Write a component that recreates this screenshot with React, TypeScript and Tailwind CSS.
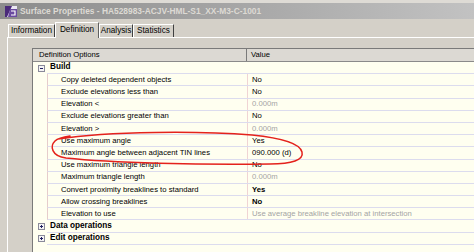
import React from "react"

type Row = { label: string; value: string; dim?: boolean; bold?: boolean }

const buildRows: Row[] = [
  { label: "Copy deleted dependent objects", value: "No" },
  { label: "Exclude elevations less than", value: "No" },
  { label: "Elevation <", value: "0.000m", dim: true },
  { label: "Exclude elevations greater than", value: "No" },
  { label: "Elevation >", value: "0.000m", dim: true },
  { label: "Use maximum angle", value: "Yes" },
  { label: "Maximum angle between adjacent TIN lines", value: "090.000 (d)" },
  { label: "Use maximum triangle length", value: "No" },
  { label: "Maximum triangle length", value: "0.000m", dim: true },
  { label: "Convert proximity breaklines to standard", value: "Yes", bold: true },
  { label: "Allow crossing breaklines", value: "No", bold: true },
  { label: "Elevation to use", value: "Use average breakline elevation at intersection", dim: true },
]

function Expander({ open }: { open: boolean }) {
  return (
    <svg width="7" height="7" viewBox="0 0 7 7" className="shrink-0">
      <rect x="0.5" y="0.5" width="6" height="6" fill="#f4f4f4" stroke="#8a8a9a" />
      <line x1="2" y1="3.5" x2="5" y2="3.5" stroke="#202060" />
      {!open && <line x1="3.5" y1="2" x2="3.5" y2="5" stroke="#202060" />}
    </svg>
  )
}

function Category({ label, open }: { label: string; open: boolean }) {
  return (
    <div className="flex h-[12.2px] items-center">
      <div className="flex w-[14px] shrink-0 justify-end pr-[2px]">
        <Expander open={open} />
      </div>
      <div className="flex h-full flex-1 items-center border-b border-[#dcdcee] pl-[3px] text-[8.2px] font-bold">
        {label}
      </div>
    </div>
  )
}

function Tab({ label, width, selected }: { label: string; width: string; selected?: boolean }) {
  if (selected) {
    return (
      <div
        className={`relative z-10 -mb-px flex h-[16px] items-center justify-center border-t border-l border-r border-t-white border-l-white border-r-[#606060] bg-[#d4d0c8] ${width}`}
      >
        {label}
      </div>
    )
  }
  return (
    <div
      className={`flex h-[13px] items-center justify-center border-t border-l border-r border-t-white border-l-white border-r-[#404040] bg-[#d4d0c8] ${width}`}
    >
      {label}
    </div>
  )
}

export default function App() {
  return (
    <div
      className="relative h-[252px] w-[474px] overflow-hidden bg-[#d4d0c8] text-[8.2px] leading-none text-black"
      style={{ fontFamily: '"Liberation Sans", Arial, sans-serif' }}
    >
      <div className="h-[3px] bg-[#dedbd5]" />
      <div className="flex h-[16px] items-center gap-[3px] bg-gradient-to-r from-[#8c8c8c] via-[#a6a6a6] to-[#c2c2c2] pl-[5px]">
        <svg width="12" height="11" viewBox="0 0 12 11">
          <rect x="0" y="0" width="12" height="11" fill="#ebe8f4" />
          <path d="M0 0 L7 0 L2 11 L0 11 Z" fill="#4a2a7a" />
          <path d="M5 3 L12 3 L12 11 L3 11 Z" fill="#6a4aa0" />
          <path d="M6 5 L10 5 L10 9 L6 9" fill="none" stroke="#ffffff" strokeWidth="1.2" />
        </svg>
        <span className="text-[8.4px] font-bold text-[#dddad4]">Surface Properties - HA528983-ACJV-HML-S1_XX-M3-C-1001</span>
      </div>

      <div className="flex h-[18px] items-end pl-[8px] pt-[3px]">
        <Tab label="Information" width="w-[47px]" />
        <Tab label="Definition" width="w-[44px]" selected />
        <Tab label="Analysis" width="w-[34px]" />
        <Tab label="Statistics" width="w-[41px]" />
      </div>

      <div className="ml-[7px] h-full border-t border-l border-white pl-[24px] pt-[10px]">
        <div className="h-full border-t border-l border-[#7a7a7a] bg-[#fffff0] text-[7.7px]">
          <div className="flex h-[13px] items-center border-b border-[#8a8a8a] bg-[#dcd9d3]">
            <div className="w-[213px] shrink-0 pl-[6px]">Definition Options</div>
            <div className="h-full border-l border-[#7a7a7a] pl-[4px] leading-[12px]">Value</div>
          </div>

          <Category label="Build" open />
          {buildRows.map((r) => (
            <div key={r.label} className="flex h-[12.2px]">
              <div className="w-[14px] shrink-0" />
              <div className="flex flex-1 border-b border-l border-b-[#dcdcee] border-l-[#e6cccc]">
                <div className="flex w-[199px] shrink-0 items-center pl-[13px]">{r.label}</div>
                <div
                  className={`flex flex-1 items-center whitespace-nowrap border-l border-[#f0d4d4] pl-[4px] ${
                    r.dim ? "text-[#a4a4a4]" : ""
                  } ${r.bold ? "font-bold" : ""}`}
                >
                  {r.value}
                </div>
              </div>
            </div>
          ))}
          <Category label="Data operations" open={false} />
          <Category label="Edit operations" open={false} />
        </div>
      </div>

      <svg className="pointer-events-none absolute inset-0" width="474" height="252" viewBox="0 0 474 252">
        <path
          d="M58 139 C110 131 200 131 252 135 C282 138 300 144 302 152 C304 160 292 164 270 164 C200 165 112 163 66 158 C51 156 50 146 55 141 C58 138 63 137 70 136"
          fill="none"
          stroke="#e4221c"
          strokeWidth="1.5"
          strokeLinecap="round"
        />
      </svg>
    </div>
  )
}
